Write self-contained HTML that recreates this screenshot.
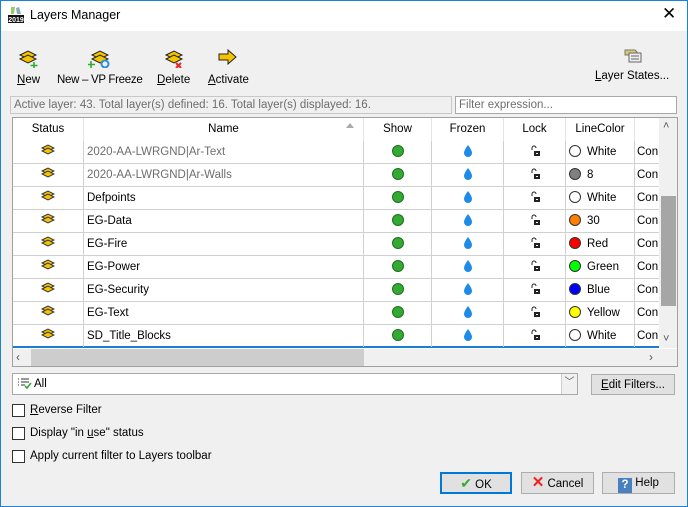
<!DOCTYPE html>
<html><head><meta charset="utf-8"><style>
*{box-sizing:border-box;margin:0;padding:0}
body{width:688px;height:507px;overflow:hidden;font-family:"Liberation Sans",Arial,sans-serif;font-size:11.5px;color:#000;background:#f0f0f0;position:relative}
.a{position:absolute}
.win{left:0;top:0;width:688px;height:507px;border:1px solid #1883d7}
.title{left:1px;top:1px;width:686px;height:30px;background:#fff}
.tb{text-align:center}
u{text-decoration:underline}
.grid{left:12px;top:117px;width:666px;height:250px;background:#fff;border:1px solid #a0a0a0;overflow:hidden}
.hd{top:0;height:23px;line-height:22px;text-align:center;border-right:1px solid #e5e5e5}
.row{left:0;width:646px;height:23px;border-bottom:1px solid #d0d0d0}
.c{position:absolute;top:0;height:22px;line-height:22px;border-right:1px solid #d0d0d0}
.dot{display:inline-block;width:12px;height:12px;border-radius:50%;border:1px solid #333;vertical-align:-2px;margin-right:6px}
.btn{background:#e1e1e1;border:1px solid #adadad;text-align:center;line-height:20px}
.cb{width:13px;height:13px;border:1px solid #333;background:#fff}
</style></head><body>
<div class="a win"></div>
<div class="a title"></div>
<svg class="a" style="left:8px;top:6px" width="16" height="18"><path d="M3 1 L7 1 L6 8 L3 8Z" fill="#9c6"/><path d="M8 2 L11 1 L13 8 L9 8Z" fill="#8ab"/><rect x="0" y="9" width="16" height="8" fill="#111"/><text x="8" y="16" font-size="7" fill="#fff" text-anchor="middle" font-family="Liberation Sans" font-weight="bold">2019</text></svg>
<div class="a" style="left:30px;top:8px;font-size:12.5px">Layers Manager</div>
<div class="a" style="left:662px;top:4px;font-size:17px">✕</div>

<svg class="a" style="left:18px;top:48px" width="24" height="20"><path d="M2 7 L10 3 L18 7 L10 11Z" fill="#f5c400" stroke="#222"/><path d="M2 11 L10 7 L18 11 L10 15Z" fill="#f5c400" stroke="#222"/><path d="M16 14v7M12.5 17.5h7" stroke="#3a3" stroke-width="1.6"/></svg>
<div class="a tb" style="left:17px;top:74px"><u>N</u>ew</div>
<svg class="a" style="left:88px;top:48px" width="26" height="20"><path d="M4 7 L12 3 L20 7 L12 11Z" fill="#f5c400" stroke="#222"/><path d="M4 11 L12 7 L20 11 L12 15Z" fill="#f5c400" stroke="#222"/><path d="M3 13v7M0 16.5h7" stroke="#3a3" stroke-width="1.6"/><circle cx="17" cy="16" r="3.5" fill="none" stroke="#2b8be0" stroke-width="2"/></svg>
<div class="a tb" style="left:57px;top:74px;letter-spacing:-0.3px">New – VP Freeze</div>
<svg class="a" style="left:164px;top:48px" width="24" height="20"><path d="M2 7 L10 3 L18 7 L10 11Z" fill="#f5c400" stroke="#222"/><path d="M2 11 L10 7 L18 11 L10 15Z" fill="#f5c400" stroke="#222"/><path d="M12 15l5 5M17 15l-5 5" stroke="#e22" stroke-width="2"/></svg>
<div class="a tb" style="left:157px;top:74px"><u>D</u>elete</div>
<svg class="a" style="left:218px;top:49px" width="20" height="16"><path d="M1 5h9V1l8 7-8 7v-4H1Z" fill="#f5c400" stroke="#222"/></svg>
<div class="a tb" style="left:208px;top:74px"><u>A</u>ctivate</div>
<svg class="a" style="left:624px;top:46px" width="18" height="18"><path d="M1 4h10l2 2v3H1Z" fill="#dcc97a" stroke="#776"/><rect x="5" y="7" width="12" height="9" fill="#eee" stroke="#666"/><path d="M7 10h8M7 13h8" stroke="#666"/></svg>
<div class="a tb" style="left:595px;top:70px"><u>L</u>ayer States...</div>

<div class="a" style="left:10px;top:96px;width:442px;height:18px;border:1px solid #c8c8c8;background:#f0f0f0;color:#6d6d6d;line-height:16px;padding-left:3px">Active layer: 43. Total layer(s) defined: 16. Total layer(s) displayed: 16.</div>
<div class="a" style="left:455px;top:96px;width:222px;height:18px;border:1px solid #a8a8a8;background:#fff;color:#6d6d6d;line-height:16px;padding-left:3px">Filter expression...</div>

<div class="a grid">
 <div class="a hd" style="left:0;width:71px">Status</div>
 <div class="a hd" style="left:71px;width:280px">Name</div>
 <div class="a" style="left:333px;top:5px;width:0;height:0;border:4px solid transparent;border-bottom:5px solid #aaa;border-top:0"></div>
 <div class="a hd" style="left:351px;width:68px">Show</div>
 <div class="a hd" style="left:419px;width:72px">Frozen</div>
 <div class="a hd" style="left:491px;width:62px">Lock</div>
 <div class="a hd" style="left:553px;width:69px">LineColor</div>
 <div class="a" style="left:646px;top:0;width:19px;height:230px;background:#f0f0f0"></div>
 <div class="a" style="left:648px;top:78px;width:15px;height:110px;background:#a6a6a6"></div>
 <div class="a" style="left:650px;top:2px;font-size:11px;color:#555">˄</div>
 <div class="a" style="left:650px;top:215px;font-size:11px;color:#555">˅</div>
 <div class="a" style="left:0;top:231px;width:646px;height:17px;background:#f0f0f0"></div>
 <div class="a" style="left:18px;top:231px;width:333px;height:17px;background:#cdcdcd"></div>
 <div class="a" style="left:3px;top:232px;font-size:12px;color:#555">‹</div>
 <div class="a" style="left:636px;top:232px;font-size:12px;color:#555">›</div>
 <div class="a" style="left:646px;top:231px;width:19px;height:17px;background:#f0f0f0"></div>
</div>
<div id="rows"></div>
<script>
var R=[["2020-AA-LWRGND|Ar-Text","#fff","White",1],["2020-AA-LWRGND|Ar-Walls","#808080","8",1],["Defpoints","#fff","White"],["EG-Data","#ff8000","30"],["EG-Fire","#f00","Red"],["EG-Power","#0f0","Green"],["EG-Security","#00f","Blue"],["EG-Text","#ff0","Yellow"],["SD_Title_Blocks","#fff","White"]];
var h="";
R.forEach(function(r,i){var t=141+i*23;var bb=i==8?"border-bottom:2px solid #1a7fd4;height:23px":"";
h+='<div class="a row" style="left:13px;top:'+t+'px;'+bb+'">'+
'<div class="c" style="left:0;width:71px;text-align:center"><svg width="14" height="12" style="vertical-align:-1px"><path d="M1 4L7 1L13 4L7 7Z" fill="#f5c400" stroke="#333"/><path d="M1 7L7 4L13 7L7 10Z" fill="#f5c400" stroke="#333"/></svg></div>'+
'<div class="c" style="left:71px;width:280px;padding-left:3px;color:'+(r[3]?'#6d6d6d':'#000')+'">'+r[0]+'</div>'+
'<div class="c" style="left:351px;width:68px;text-align:center"><span class="dot" style="background:#3a3;margin:0;border-color:#1f6e1f"></span></div>'+
'<div class="c" style="left:419px;width:72px;text-align:center"><svg width="10" height="13" style="vertical-align:-2px"><path d="M5 1C5 1 1 6 1 9a4 4 0 0 0 8 0C9 6 5 1 5 1Z" fill="#1e8be8"/></svg></div>'+
'<div class="c" style="left:491px;width:62px;text-align:center"><svg width="10" height="12" style="vertical-align:-2px"><path d="M2 5V3a2 2 0 0 1 4 0" fill="none" stroke="#222"/><rect x="4" y="6" width="6" height="5" fill="#222"/><rect x="6" y="8" width="2" height="1" fill="#fff"/></svg></div>'+
'<div class="c" style="left:553px;width:69px;padding-left:3px"><span class="dot" style="background:'+r[1]+'"></span>'+r[2]+'</div>'+
'<div class="c" style="left:622px;width:24px;padding-left:2px;border-right:0;overflow:hidden">Con</div></div>';});
document.getElementById("rows").innerHTML=h;
</script>

<div class="a" style="left:12px;top:373px;width:566px;height:22px;border:1px solid #a8a8a8;background:#fff"></div>
<svg class="a" style="left:17px;top:378px" width="16" height="12"><path d="M1 1h1M4 1h8M1 4h1M4 4h8M1 7h1M4 7h4" stroke="#333"/><path d="M8 8l2 2 4-5" stroke="#3a3" stroke-width="1.6" fill="none"/></svg>
<div class="a" style="left:34px;top:378px">All</div>
<div class="a" style="left:561px;top:374px;width:16px;height:20px;border-left:1px solid #ccc;background:#f0f0f0;text-align:center;color:#555;font-size:10px;line-height:18px">﹀</div>
<div class="a btn" style="left:591px;top:374px;width:84px;height:21px"><u>E</u>dit Filters...</div>

<div class="a cb" style="left:12px;top:404px"></div><div class="a" style="left:30px;top:404px"><u>R</u>everse Filter</div>
<div class="a cb" style="left:12px;top:427px"></div><div class="a" style="left:30px;top:427px">Display "in <u>u</u>se" status</div>
<div class="a cb" style="left:12px;top:450px"></div><div class="a" style="left:30px;top:450px">Apply current filter to Layers toolbar</div>

<div class="a btn" style="left:440px;top:472px;width:72px;height:22px;border:2px solid #0078d7;line-height:18px"><span style="color:#3a3;font-size:14px">✔</span> OK</div>
<div class="a btn" style="left:521px;top:472px;width:73px;height:22px"><span style="color:#e22;font-size:15px;font-weight:bold">✕</span> Cancel</div>
<div class="a btn" style="left:602px;top:472px;width:73px;height:22px"><span style="display:inline-block;width:14px;height:15px;background:#4a7fc0;color:#fff;font-weight:bold;line-height:15px;vertical-align:-2px">?</span> Help</div>
</body></html>
